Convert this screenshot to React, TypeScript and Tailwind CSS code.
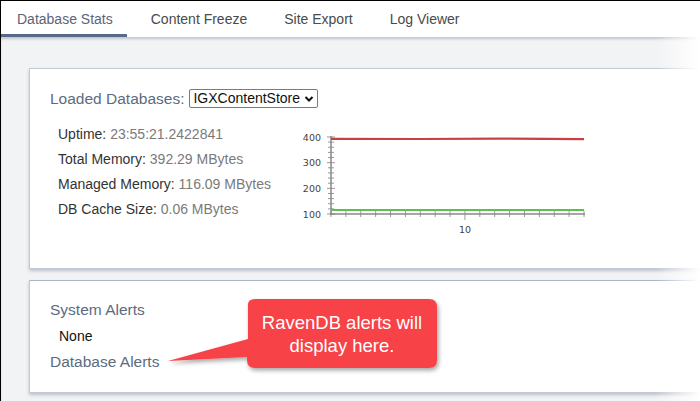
import React from "react";

const tabs = ["Database Stats", "Content Freeze", "Site Export", "Log Viewer"];

const stats = [
  { label: "Uptime:", value: "23:55:21.2422841" },
  { label: "Total Memory:", value: "392.29 MBytes" },
  { label: "Managed Memory:", value: "116.09 MBytes" },
  { label: "DB Cache Size:", value: "0.06 MBytes" },
];

function MemoryChart() {
  // axis box: x 30..283, y 10..87 (400..100)
  const yTicks = [];
  for (let i = 0; i <= 15; i++) {
    const y = 10 + (77 / 15) * i;
    const major = i % 5 === 0;
    yTicks.push(<line key={"y" + i} x1={major ? 26 : 27} x2={major ? 34 : 33} y1={y} y2={y} stroke="#999" strokeWidth="1" />);
  }
  const xTicks = [];
  for (let i = 0; i <= 17; i++) {
    const x = 30 + (253 / 17) * i;
    xTicks.push(<line key={"x" + i} x1={x} x2={x} y1={84} y2={i === 9 ? 93 : 90} stroke="#999" strokeWidth="1" />);
  }
  return (
    <svg width="290" height="115" viewBox="0 0 290 115" className="shrink-0 mt-[7px]" style={{ fontFamily: "Tahoma, 'DejaVu Sans', sans-serif" }}>
      {yTicks}
      {xTicks}
      <line x1="30" x2="30" y1="9" y2="88" stroke="#888" strokeWidth="1.5" />
      <line x1="29" x2="284" y1="87" y2="87" stroke="#888" strokeWidth="1.5" />
      <text x="20" y="13.5" fontSize="9.5" fill="#444" textAnchor="end">400</text>
      <text x="20" y="39" fontSize="9.5" fill="#444" textAnchor="end">300</text>
      <text x="20" y="64.8" fontSize="9.5" fill="#444" textAnchor="end">200</text>
      <text x="20" y="90.5" fontSize="9.5" fill="#444" textAnchor="end">100</text>
      <text x="164" y="106" fontSize="9.5" fill="#444" textAnchor="middle">10</text>
      <polyline points="30,11.8 120,12 200,11.6 283,12.2" fill="none" stroke="#c94040" strokeWidth="2.2" />
      <line x1="30" x2="283" y1="83" y2="83" stroke="#5cc04e" strokeWidth="2.2" />
    </svg>
  );
}

function Callout() {
  return (
    <div className="absolute left-[160px] top-[292px] w-[290px] h-[90px]">
      <svg width="290" height="90" viewBox="0 0 290 90" className="absolute inset-0">
        <defs>
          <filter id="sh" x="-10%" y="-20%" width="130%" height="150%">
            <feDropShadow dx="1.5" dy="2.5" stdDeviation="2" floodColor="#000" floodOpacity="0.35" />
          </filter>
        </defs>
        <path
          d="M94 6 H268 Q276 6 276 14 V67 Q276 75 268 75 H94 Q86 75 86 67 V64 L7 68 L87 46 V14 Q86 6 94 6 Z"
          fill="#f74346"
          filter="url(#sh)"
        />
      </svg>
      <div className="absolute left-[86px] top-[6px] w-[190px] h-[69px] flex flex-col items-center justify-center text-white text-[18.5px] leading-[23px] font-['Liberation_Sans',Arial,sans-serif]">
        <span>RavenDB alerts will</span>
        <span>display here.</span>
      </div>
    </div>
  );
}

export default function App() {
  return (
    <div className="relative w-[700px] h-[401px] overflow-hidden bg-[#f2f3f5] border-t border-l border-black font-['Liberation_Sans',Arial,sans-serif]">
      {/* Tab bar */}
      <div className="flex h-[36px] bg-white items-stretch">
        {tabs.map((t, i) => (
          <div
            key={t}
            className={
              i === 0
                ? "flex items-center pl-[16px] pr-[14px] text-[14px] text-[#5b6477] border-b-[3px] border-[#56698a] pt-[3px]"
                : i === 1
                ? "flex items-center px-[16px] ml-[8px] text-[14px] text-[#4a4a4a]"
                : "flex items-center px-[16px] ml-[5px] text-[14px] text-[#4a4a4a]"
            }
          >
            {t}
          </div>
        ))}
      </div>

      {/* Content */}
      <div className="relative shadow-[inset_0_3px_3px_-1px_rgba(100,110,130,0.35)] pt-[31px] pl-[28px] h-[364px] flex flex-col gap-[11px]">
        <div className="bg-white border border-[#c3c9d4] shadow-[0_2px_3px_rgba(90,100,120,0.35)] h-[201px] w-[700px] pl-[20px] pt-[18px]">
          <div className="flex items-center gap-[5px] text-[15.5px] text-[#5d6b80]">
            <span>Loaded Databases:</span>
            <div className="flex items-center gap-[4px] h-[19px] border border-[#7a7a7a] rounded-[2px] pl-[3px] pr-[3px] text-[14px] text-[#111]">
              <span>IGXContentStore</span>
              <svg width="10" height="8" viewBox="0 0 10 8">
                <path d="M1.5 2 L5 5.5 L8.5 2" fill="none" stroke="#111" strokeWidth="2" />
              </svg>
            </div>
          </div>
          <div className="flex mt-[10px]">
            <div className="flex flex-col pl-[8px] pt-[2px] w-[251px]">
              {stats.map((s) => (
                <div key={s.label} className="h-[25px] text-[14px] leading-[25px]">
                  <span className="text-[#333]">{s.label}</span>{" "}
                  <span className="text-[#7a7a7a]">{s.value}</span>
                </div>
              ))}
            </div>
            <MemoryChart />
          </div>
        </div>
        <div className="bg-white border border-[#c3c9d4] border-t-[#a9b4c7] shadow-[0_2px_3px_rgba(90,100,120,0.35)] h-[113px] w-[700px] pl-[20px] pt-[19px]">
          <div className="text-[15.5px] text-[#5d6b80] leading-[20px]">System Alerts</div>
          <div className="text-[14px] text-[#111] pl-[9px] leading-[20px] mt-[6px]">None</div>
          <div className="text-[15.5px] text-[#5d6b80] leading-[20px] mt-[6px]">Database Alerts</div>
        </div>
      </div>

      <Callout />

      {/* torn right edge fade */}
      <div className="absolute -top-px right-0 w-[45px] h-[402px] bg-gradient-to-r from-white/0 to-white" />
    </div>
  );
}
